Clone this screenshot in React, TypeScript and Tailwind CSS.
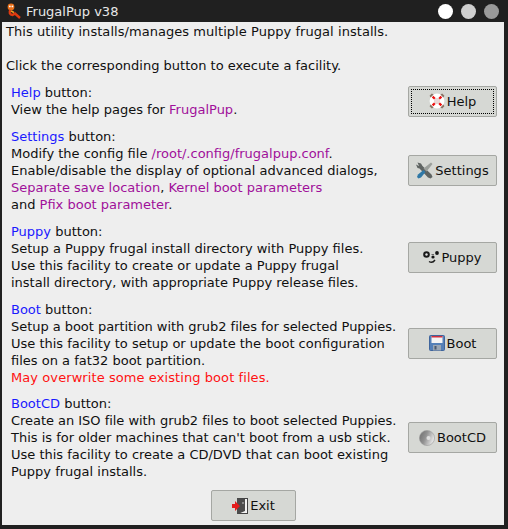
import React from 'react';

const HelpIcon = () => (
  <svg width="16" height="16" viewBox="0 0 16 16">
    <circle cx="8" cy="8" r="5.2" fill="none" stroke="#ffffff" strokeWidth="4.4" />
    <circle cx="8" cy="8" r="2.8" fill="#ecd6d6" />
    <path d="M2.8 4.4 L4.4 2.8 L6.6 5 L5 6.6 Z M11.6 2.8 L13.2 4.4 L11 6.6 L9.4 5 Z M2.8 11.6 L5 9.4 L6.6 11 L4.4 13.2 Z M13.2 11.6 L11.6 13.2 L9.4 11 L11 9.4 Z" fill="#ee1010" />
    <path d="M0.6 2.8 L2.8 0.6 L4.6 1.6 L1.6 4.6 Z M13.2 0.6 L15.4 2.8 L14.4 4.6 L11.4 1.6 Z M0.6 13.2 L1.6 11.4 L4.6 14.4 L2.8 15.4 Z M15.4 13.2 L13.2 15.4 L11.4 14.4 L14.4 11.4 Z" fill="#8a7465" />
  </svg>
);

const SettingsIcon = () => (
  <svg width="17" height="17" viewBox="0 0 17 17">
    <path d="M1.5 0.5 L5 1.5 L6.5 4 L15.5 12.5 L16.5 15 L14.5 16.5 L12 15.5 L3.5 6.5 L1.5 6 L0 2.5 L3 4 Z" fill="#5f6462" />
    <path d="M15 0.5 L16.5 2 L10.5 9.5 L7.5 6.5 Z" fill="#9a9e9a" />
    <path d="M7.5 8 L9.5 10 L5 15.5 L2.5 16.5 L1 15 L2 12.5 Z" fill="#2f78a6" />
  </svg>
);

const PuppyIcon = () => (
  <svg width="16" height="14" viewBox="0 0 16 14">
    <circle cx="3.5" cy="4.5" r="3.3" fill="#1a1a1a" />
    <circle cx="3.5" cy="4.5" r="1.2" fill="#e4e4e4" />
    <circle cx="14" cy="3" r="1.9" fill="#141414" />
    <circle cx="10" cy="7" r="1.6" fill="#141414" />
    <path d="M6 11.5 Q9.5 13.5 12 10" fill="none" stroke="#1a1a1a" strokeWidth="1.4" />
    <path d="M8.5 4.5 L11 4.5" stroke="#666666" strokeWidth="1" />
  </svg>
);

const BootIcon = () => (
  <svg width="16" height="16" viewBox="0 0 16 16">
    <rect x="0.5" y="0.5" width="15" height="15" rx="1" fill="#5480b8" stroke="#3f659c" />
    <rect x="2.5" y="1" width="11" height="7" fill="#f4f4f4" />
    <rect x="2.5" y="1" width="11" height="1.5" fill="#d03040" />
    <rect x="4" y="10" width="8" height="5.5" fill="#9aa6b4" />
    <rect x="5.5" y="11" width="2" height="3.5" fill="#4a5a70" />
  </svg>
);

const CdIcon = () => (
  <svg width="16" height="16" viewBox="0 0 16 16">
    <defs>
      <linearGradient id="cd" x1="0" y1="0" x2="1" y2="0.4">
        <stop offset="0" stopColor="#6c6c6c" />
        <stop offset="0.5" stopColor="#929292" />
        <stop offset="1" stopColor="#e2e2e2" />
      </linearGradient>
    </defs>
    <circle cx="8" cy="8" r="7.6" fill="url(#cd)" stroke="#9c9c9c" strokeWidth="0.6" />
    <circle cx="9.5" cy="8" r="2" fill="#dedede" />
  </svg>
);

const ExitIcon = () => (
  <svg width="16" height="16" viewBox="0 0 16 16">
    <rect x="5.5" y="0.5" width="10" height="15" fill="#f4f4f4" stroke="#444444" />
    <path d="M5 0 L13 1 L13 13 L6 16 L5 16 Z" fill="#4c4c4c" />
    <circle cx="11" cy="5" r="0.8" fill="#dddddd" />
    <path d="M0 6 H3 V3 L8 8 L3 13 V10 H0 Z" fill="#e41c1c" />
  </svg>
);

const Btn = ({ icon, label, focus, wide }: { icon: React.ReactNode; label: string; focus?: boolean; wide?: boolean }) => (
  <button className={`relative flex h-[31px] shrink-0 items-center justify-center gap-[2px] rounded-[2px] border border-[#a5a7a3] bg-[#d6d8d4] text-[13px] text-[#101010] ${wide ? 'w-[85px]' : 'w-[89px]'}`}>
    {icon}
    <span>{label}</span>
    {focus && <span className="absolute inset-[2px] border border-dotted border-black" />}
  </button>
);

const Section = ({ children, button }: { children: React.ReactNode; button: React.ReactNode }) => (
  <div className="flex items-center justify-between pl-[5px]">
    <div>{children}</div>
    {button}
  </div>
);

const Blue = ({ children }: { children: React.ReactNode }) => <span className="text-[#1a1aff]">{children}</span>;
const Purple = ({ children }: { children: React.ReactNode }) => <span className="text-[#a0109a]">{children}</span>;

export default function App() {
  return (
    <div
      className="flex h-[529px] w-[508px] flex-col bg-[#202020] text-[13px] leading-[17px] text-[#101010]"
      style={{ fontFamily: '"DejaVu Sans", sans-serif' }}
    >
      <div className="flex h-[22px] shrink-0 items-center pl-[6px] pr-[9px] text-[#e8e8e8]">
        <svg width="16" height="16" viewBox="0 0 16 16">
          <circle cx="5" cy="4" r="3.4" fill="#e8701a" />
          <circle cx="3.8" cy="3.4" r="0.9" fill="#ffffff" />
          <circle cx="6.4" cy="3.4" r="0.9" fill="#ffffff" />
          <path d="M4.5 7 C2.5 9 4 12 6.5 12 L9 10.5 L14 15" fill="none" stroke="#e03a10" strokeWidth="2.4" />
          <path d="M5 8 L8 9.5" stroke="#f0a020" strokeWidth="1.4" />
        </svg>
        <span className="ml-[4px] text-[13px]">FrugalPup v38</span>
        <div className="ml-auto flex gap-[8px]">
          <span className="size-[15px] rounded-full bg-white" />
          <span className="size-[15px] rounded-full bg-[#cfcfcf]" />
          <span className="size-[15px] rounded-full bg-[#9a9a9a]" />
        </div>
      </div>
      <div className="mb-[4px] ml-[2px] mr-[4px] flex min-h-0 flex-1 flex-col bg-[#eeeeee] pl-[4px] pr-[7px] pt-[1px]">
        <p className="tracking-[0.05px]">This utility installs/manages multiple Puppy frugal installs.</p>
        <p className="mt-[17px]">Click the corresponding button to execute a facility.</p>
        <div className="mt-[10px] flex flex-col">
          <Section button={<Btn icon={<HelpIcon />} label="Help" focus />}>
            <p><Blue>Help</Blue> button:</p>
            <p>View the help pages for <Purple>FrugalPup</Purple>.</p>
          </Section>
          <div className="h-[9.5px]" />
          <Section button={<Btn icon={<SettingsIcon />} label="Settings" />}>
            <p><Blue>Settings</Blue> button:</p>
            <p>Modify the config file <Purple>/root/.config/frugalpup.conf</Purple>.</p>
            <p>Enable/disable the display of optional advanced dialogs,</p>
            <p><Purple>Separate save location</Purple>, <Purple>Kernel boot parameters</Purple></p>
            <p>and <Purple>Pfix boot parameter</Purple>.</p>
          </Section>
          <div className="h-[10.5px]" />
          <Section button={<Btn icon={<PuppyIcon />} label="Puppy" />}>
            <p><Blue>Puppy</Blue> button:</p>
            <p>Setup a Puppy frugal install directory with Puppy files.</p>
            <p>Use this facility to create or update a Puppy frugal</p>
            <p>install directory, with appropriate Puppy release files.</p>
          </Section>
          <div className="h-[9.5px]" />
          <Section button={<Btn icon={<BootIcon />} label="Boot" />}>
            <p><Blue>Boot</Blue> button:</p>
            <p className="tracking-[-0.04px]">Setup a boot partition with grub2 files for selected Puppies.</p>
            <p>Use this facility to setup or update the boot configuration</p>
            <p>files on a fat32 boot partition.</p>
            <p className="tracking-[0.08px] text-[#ff1212]">May overwrite some existing boot files.</p>
          </Section>
          <div className="h-[9.5px]" />
          <Section button={<Btn icon={<CdIcon />} label="BootCD" />}>
            <p><Blue>BootCD</Blue> button:</p>
            <p className="tracking-[-0.035px]">Create an ISO file with grub2 files to boot selected Puppies.</p>
            <p>This is for older machines that can't boot from a usb stick.</p>
            <p>Use this facility to create a CD/DVD that can boot existing</p>
            <p>Puppy frugal installs.</p>
          </Section>
        </div>
        <div className="mt-[10px] flex justify-center pl-[4px]">
          <Btn icon={<ExitIcon />} label="Exit" wide />
        </div>
      </div>
    </div>
  );
}
